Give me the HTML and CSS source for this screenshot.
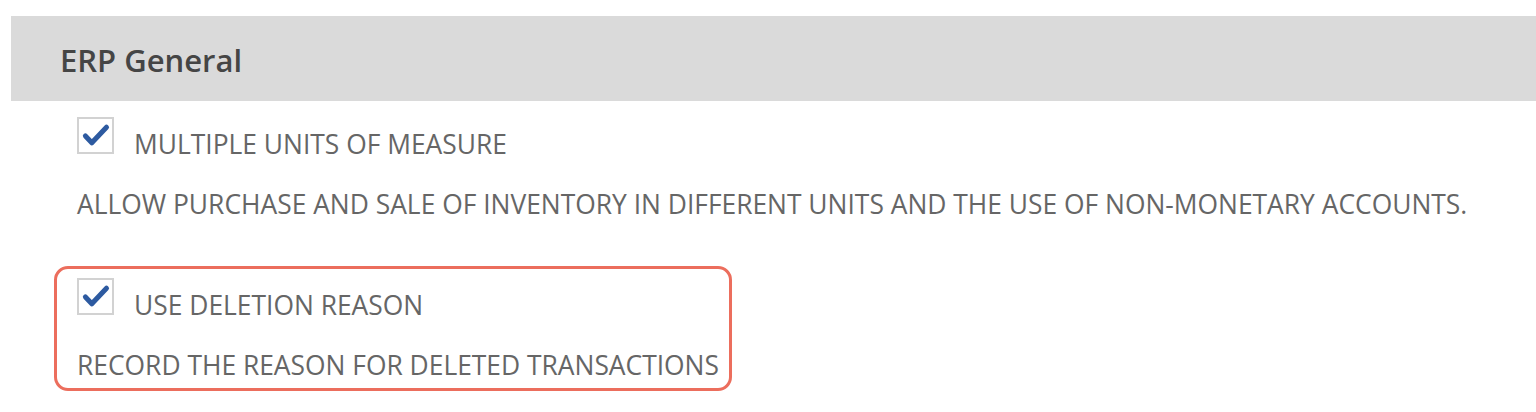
FILE: index.html
```html
<!DOCTYPE html>
<html lang="en">
<head>
<meta charset="utf-8">
<title>ERP General</title>
<link rel="stylesheet" href="styles.css">
</head>
<body>
<section class="panel">
  <header class="panel-head">
    <h2 class="panel-title">ERP General</h2>
  </header>
  <div class="options">
    <div class="option">
      <div class="option-row">
        <span class="checkbox">
          <svg viewBox="0 0 36 36" width="36" height="36" aria-hidden="true"><path d="M7 18.5 L14 26 L30 9" fill="none" stroke="#2d5aa0" stroke-width="5.5" stroke-linecap="round" stroke-linejoin="round"/></svg>
        </span>
        <span class="option-label">MULTIPLE UNITS OF MEASURE</span>
      </div>
      <p class="option-desc">ALLOW PURCHASE AND SALE OF INVENTORY IN DIFFERENT UNITS AND THE USE OF NON-MONETARY ACCOUNTS.</p>
    </div>
    <div class="option option-highlight">
      <div class="option-row">
        <span class="checkbox">
          <svg viewBox="0 0 36 36" width="36" height="36" aria-hidden="true"><path d="M7 18.5 L14 26 L30 9" fill="none" stroke="#2d5aa0" stroke-width="5.5" stroke-linecap="round" stroke-linejoin="round"/></svg>
        </span>
        <span class="option-label">USE DELETION REASON</span>
      </div>
      <p class="option-desc">RECORD THE REASON FOR DELETED TRANSACTIONS</p>
    </div>
  </div>
</section>
</body>
</html>
```
FILE: styles.css
```css
html, body {
  margin: 0;
  padding: 0;
  background: #ffffff;
}

body {
  font-family: "Open Sans", "Liberation Sans", sans-serif;
  color: #666666;
  overflow: hidden;
}

.panel {
  padding-top: 16px;
}

.panel-head {
  margin-left: 11px;
  height: 85px;
  background: #dadada;
  display: flex;
  align-items: center;
  padding-left: 49px;
}

.panel-title {
  margin: 0;
  font-size: 31px;
  font-weight: 600;
  color: #454545;
  line-height: 1;
  padding-top: 3px;
}

.options {
  padding-top: 4px;
  padding-left: 54px;
  display: flex;
  flex-direction: column;
  align-items: flex-start;
  gap: 36px;
}

.option {
  border: 3px solid transparent;
  border-radius: 14px;
  padding: 9px 10px 6px 20px;
}

.option-highlight {
  border-color: #ec6e5d;
}

.option-row {
  display: flex;
  align-items: baseline;
  gap: 20px;
  font-size: 26.4px;
  line-height: 34px;
}

.checkbox {
  width: 33px;
  height: 33px;
  border: 2px solid #d2d2d2;
  background: #ffffff;
  display: block;
  flex: none;
}

.checkbox svg {
  display: block;
  width: 33px;
  height: 33px;
}

.option-label {
  color: #666666;
}

.option-desc {
  margin: 26px 0 0 0;
  font-size: 26.4px;
  line-height: 34px;
  color: #666666;
}
```
